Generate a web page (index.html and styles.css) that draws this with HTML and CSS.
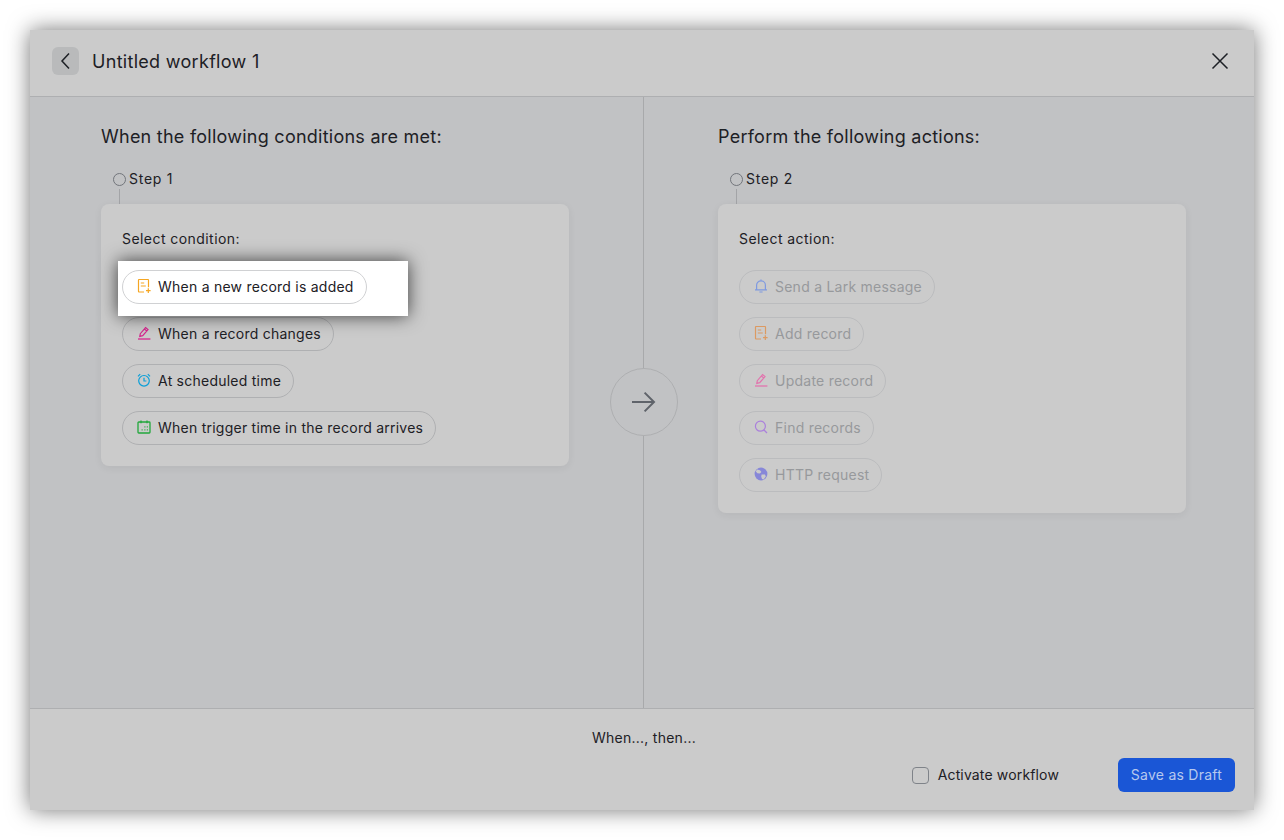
FILE: index.html
```html
<!DOCTYPE html>
<html lang="en">
<head>
<meta charset="utf-8">
<title>Untitled workflow 1</title>
<link rel="stylesheet" href="styles.css">
</head>
<body>
<div class="window">
  <header class="topbar">
    <button class="back" aria-label="Back">
      <svg width="16" height="20" viewBox="0 0 16 20"><path d="M11 2.5 4 10l7 7.5" class="stroke-dark"/></svg>
    </button>
    <h1 class="title">Untitled workflow 1</h1>
    <svg class="close" width="18" height="18" viewBox="0 0 18 18"><path d="M1.5 1.5l15 15M16.5 1.5l-15 15" class="stroke-dark"/></svg>
  </header>
  <main class="panes">
    <section class="pane pane-left">
      <h2 class="heading">When the following conditions are met:</h2>
      <div class="step"><span class="dot"></span>Step 1</div>
      <div class="connector"></div>
      <div class="card">
        <div class="card-title">Select condition:</div>
        <div class="chips">
          <div class="chip chip-hl">
            <svg class="icon" viewBox="0 0 14 14" fill="none" stroke="#f5a623" stroke-width="1.2"><path d="M7 13H2.2a.7.7 0 0 1-.7-.7V1.2a.7.7 0 0 1 .7-.7h8.6a.7.7 0 0 1 .7.7v7M3.8 4h3.4M3.8 7h5M9 11.6h4.6M11.3 9.3v4.6"/></svg>
            When a new record is added
          </div>
          <div class="chip">
            <svg class="icon" viewBox="0 0 14 14" fill="none" stroke="#d6268d" stroke-width="1.2"><path d="M1 13h12.4" stroke-width="1.3"/><path d="M2.8 10.4l.5-2.7L8.6 1.6l2.4 2-5.3 6-2.9.8zM7.4 3l2.4 2"/></svg>
            When a record changes
          </div>
          <div class="chip">
            <svg class="icon" viewBox="0 0 14 14" fill="none" stroke="#0a9fd8" stroke-width="1.2"><circle cx="7" cy="7.8" r="5.3"/><path d="M7 4.8v3.2h2.4M1 3.4l2.2-2.2M13 3.4l-2.2-2.2"/></svg>
            At scheduled time
          </div>
          <div class="chip">
            <svg class="icon" viewBox="0 0 14 14" fill="none" stroke="#22a83c" stroke-width="1.3"><rect x="1" y="2" width="12" height="11" rx=".8"/><path d="M4 .6v2.6M10 .6v2.6M7.4 6.8h1M9.8 6.8h1M4.6 9.8h1M7.4 9.8h1M9.8 9.8h1"/></svg>
            When trigger time in the record arrives
          </div>
        </div>
      </div>
    </section>
    <section class="pane pane-right">
      <h2 class="heading">Perform the following actions:</h2>
      <div class="step"><span class="dot"></span>Step 2</div>
      <div class="connector"></div>
      <div class="card">
        <div class="card-title">Select action:</div>
        <div class="chips">
          <div class="chip chip-off">
            <svg class="icon" viewBox="0 0 14 14" fill="none" stroke="#7f9ae0" stroke-width="1.2"><path d="M2.6 10.6V6.2a4.4 4.4 0 0 1 8.8 0v4.4M1 10.8h12M5.4 13h3.2M7 .4v1.2"/></svg>
            Send a Lark message
          </div>
          <div class="chip chip-off">
            <svg class="icon" viewBox="0 0 14 14" fill="none" stroke="#dc9a62" stroke-width="1.2"><path d="M7 13H2.2a.7.7 0 0 1-.7-.7V1.2a.7.7 0 0 1 .7-.7h8.6a.7.7 0 0 1 .7.7v7M3.8 4h3.4M3.8 7h5M9 11.6h4.6M11.3 9.3v4.6"/></svg>
            Add record
          </div>
          <div class="chip chip-off">
            <svg class="icon" viewBox="0 0 14 14" fill="none" stroke="#e273ad" stroke-width="1.2"><path d="M1 13h12.4" stroke-width="1.3"/><path d="M2.8 10.4l.5-2.7L8.6 1.6l2.4 2-5.3 6-2.9.8zM7.4 3l2.4 2"/></svg>
            Update record
          </div>
          <div class="chip chip-off">
            <svg class="icon" viewBox="0 0 14 14" fill="none" stroke="#ab80dc" stroke-width="1.2"><circle cx="6.4" cy="6.2" r="5"/><path d="M10 10l3 3"/></svg>
            Find records
          </div>
          <div class="chip chip-off">
            <svg class="icon" viewBox="0 0 14 14"><circle cx="7" cy="7" r="6.4" fill="#8787d8"/><path d="M3 2.6l3 .6 1.4 1.8-1.6 1.6-2.4-.4-1.6-1.6zM7.6 7.4l3.4.2.8 1.8-2.2 3-1.6-.4-.8-2.6z" fill="#cbcbcb"/></svg>
            HTTP request
          </div>
        </div>
      </div>
    </section>
    <div class="arrow">
      <svg width="24" height="24" viewBox="0 0 24 24" fill="none" stroke="#5f636a" stroke-width="2"><path d="M0 12h22M12.6 2.6 22 12l-9.4 9.4"/></svg>
    </div>
  </main>
  <footer class="footer">
    <div class="summary">When..., then...</div>
    <div class="actions">
      <label class="activate"><span class="check"></span>Activate workflow</label>
      <button class="save">Save as Draft</button>
    </div>
  </footer>
</div>
</body>
</html>
```
FILE: styles.css
```css
* { box-sizing: border-box; }
html, body { height: 100%; }
body {
  margin: 0;
  padding: 30px;
  background: #fff;
  font-family: Inter, "Liberation Sans", sans-serif;
  color: #1d2025;
  overflow: hidden;
}
.window {
  width: 1224px;
  height: 780px;
  display: flex;
  flex-direction: column;
  background: #c1c2c4;
  border-radius: 2px;
  box-shadow: 0 0 22px rgba(0, 0, 0, .55);
}
.stroke-dark { fill: none; stroke: #1d2025; stroke-width: 1.5; }
.topbar {
  height: 67px;
  flex: none;
  display: flex;
  align-items: center;
  padding: 0 25px 4px 22px;
  background: #cbcbcb;
  border-bottom: 1px solid #aeafb1;
}
.back {
  width: 27px;
  height: 28px;
  padding: 0;
  border: 0;
  border-radius: 6px;
  background: #b9babb;
  display: flex;
  align-items: center;
  justify-content: center;
}
.title { margin: 2px 0 0 13px; font-size: 18px; font-weight: 400; line-height: 24px; letter-spacing: .3px; flex: 1; }
.panes { flex: 1; min-height: 0; display: flex; position: relative; }
.pane { height: 100%; padding-top: 27px; }
.pane-left { width: 614px; padding-left: 71px; border-right: 1px solid #a8a9ab; }
.pane-right { flex: 1; padding-left: 74px; }
.heading { margin: 0; font-size: 18px; line-height: 26px; font-weight: 400; letter-spacing: .25px; }
.step {
  margin: 19px 0 0 12px;
  display: flex;
  align-items: center;
  gap: 3px;
  font-size: 14px;
  line-height: 20px;
  font-weight: 400;
  letter-spacing: .75px;
}
.dot { width: 13px; height: 13px; border: 1px solid #72757b; border-radius: 50%; }
.connector { width: 1px; height: 15px; margin-left: 18px; background: #a3a4a7; }
.card {
  width: 468px;
  padding: 24px 21px 21px;
  background: #cbcbcb;
  border-radius: 8px;
  box-shadow: 0 2px 8px rgba(0, 0, 0, .06);
}
.card-title { font-size: 14px; line-height: 22px; font-weight: 400; letter-spacing: .44px; }
.chips { margin-top: 20px; display: flex; flex-direction: column; align-items: flex-start; gap: 13px; }
.chip {
  height: 34px;
  display: flex;
  align-items: center;
  gap: 7px;
  padding: 0 12px 2px 14px;
  border: 1px solid #afb0b2;
  border-radius: 17px;
  font-size: 14px;
  letter-spacing: .24px;
  white-space: nowrap;
}
.icon { width: 14px; height: 14px; flex: none; }
.chip-off { color: #97999c; border-color: #bbbcbe; }
.chip-hl {
  position: relative;
  isolation: isolate;
  border-color: transparent;
}
.chip-hl::before {
  content: "";
  position: absolute;
  z-index: -2;
  inset: -10px -42px -13px -5px;
  background: #fff;
  box-shadow: 0 0 18px rgba(0, 0, 0, .7);
}
.chip-hl::after {
  content: "";
  position: absolute;
  z-index: -1;
  inset: -1px;
  background: #fff;
  border: 1px solid #d0d1d3;
  border-radius: 17px;
}
.arrow {
  position: absolute;
  left: 580px;
  top: 50%;
  transform: translateY(calc(-50% - 1px));
  width: 68px;
  height: 68px;
  border: 1px solid #aeafb1;
  border-radius: 50%;
  background: #c1c2c4;
  display: flex;
  align-items: center;
  justify-content: center;
}
.footer {
  height: 102px;
  flex: none;
  background: #cbcbcb;
  border-top: 1px solid #aeafb1;
  padding: 18px 19px 0 23px;
}
.summary { text-align: center; font-size: 14px; line-height: 22px; letter-spacing: .25px; }
.actions { margin-top: 9px; display: flex; justify-content: flex-end; align-items: center; }
.activate { display: flex; align-items: center; gap: 9px; font-size: 14px; letter-spacing: .15px; margin: 0 59px 2px 0; }
.check { width: 17px; height: 17px; margin-top: 2px; border: 1.5px solid #7f8389; border-radius: 4px; }
.save {
  width: 117px;
  height: 34px;
  padding: 0 0 2px;
  border: 0;
  border-radius: 6px;
  background: #1a56d6;
  color: #b6c8ee;
  font: 14px Inter, "Liberation Sans", sans-serif;
  letter-spacing: .25px;
}
```
